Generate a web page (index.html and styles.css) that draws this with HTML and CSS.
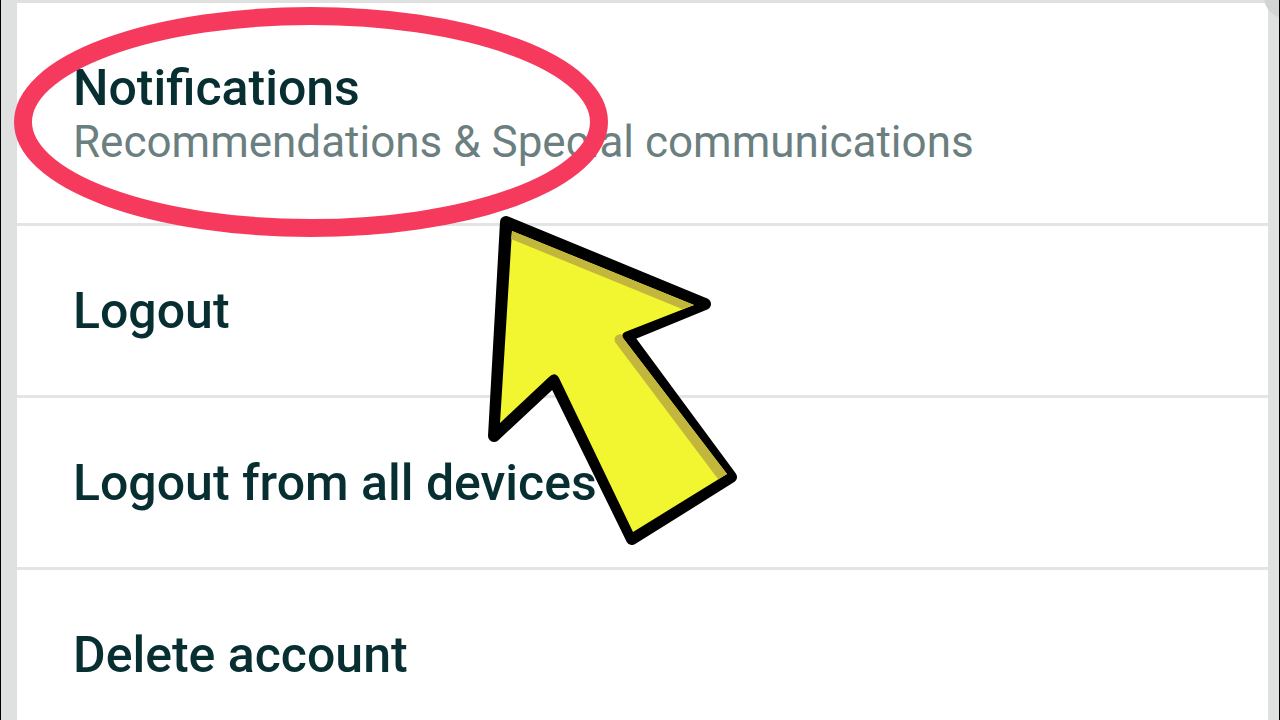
FILE: index.html
```html
<!DOCTYPE html>
<html lang="en">
<head>
<meta charset="utf-8">
<meta name="viewport" content="width=device-width, initial-scale=1">
<title>Settings</title>
<link rel="stylesheet" href="styles.css">
</head>
<body>
<main class="screen">
  <ul class="settings">
    <li class="item">
      <button class="row row-detailed" type="button">
        <span class="title">Notifications</span>
        <span class="subtitle">Recommendations &amp; Special communications</span>
      </button>
    </li>
    <li class="item"><button class="row" type="button"><span class="title">Logout</span></button></li>
    <li class="item"><button class="row" type="button"><span class="title">Logout from all devices</span></button></li>
    <li class="item"><button class="row" type="button"><span class="title">Delete account</span></button></li>
  </ul>
  <span class="corner" aria-hidden="true"></span>
  <svg class="markup" width="760" height="560" viewBox="0 0 760 560" aria-hidden="true">
    <ellipse cx="311" cy="122" rx="288" ry="106" fill="none" stroke="#f63a5d" stroke-width="18"/>
    <path d="M506 222 L705 304 L627 336 L731 477 L632 539 L554 380 L494 436 Z" fill="#000" stroke="#000" stroke-width="12" stroke-linejoin="round"/>
    <path d="M512 231 L694 305 L625 332 Q621 334 623 338 L727 474 L633 532 L559 378 Q555 371 549 377 L500 423 Z" fill="#f2f631"/>
    <path d="M512 231 L694 305 L682 309 L511 239 Z M621 334 L623 338 L727 474 L718 479 L615 342 Q613 335 621 334 Z" fill="#c2b63d"/>
  </svg>
</main>
</body>
</html>
```
FILE: styles.css
```css
* {
  box-sizing: border-box;
}

body {
  margin: 0;
  background: #dfe1e0;
  font-family: Roboto, "Liberation Sans", sans-serif;
}

.screen {
  position: relative;
  height: 100vh;
  padding: 3px 11px 0 16px;
  border: solid #000;
  border-width: 0 1px;
  overflow: hidden;
  display: flex;
}

.settings {
  flex: 1;
  margin: 0;
  padding: 0;
  list-style: none;
  background: #fff;
  overflow: hidden;
}

.item {
  border-bottom: 3px solid #e2e4e5;
}

.row {
  display: flex;
  flex-direction: column;
  width: 100%;
  padding: 58px 56px 57px;
  border: 0;
  background: none;
  font: inherit;
  text-align: left;
  cursor: pointer;
}

.row-detailed {
  padding-bottom: 54px;
}

.title {
  color: #072f32;
  font-size: 50px;
  font-weight: 500;
  line-height: 54px;
}

.subtitle {
  color: #6b7f80;
  font-size: 44px;
  line-height: 54px;
}

.corner {
  position: absolute;
  top: -24px;
  right: -27px;
  width: 42px;
  height: 42px;
  border-radius: 50%;
  background: #d2d3d3;
}

.markup {
  position: absolute;
  top: 0;
  left: -1px;
  pointer-events: none;
}
```
